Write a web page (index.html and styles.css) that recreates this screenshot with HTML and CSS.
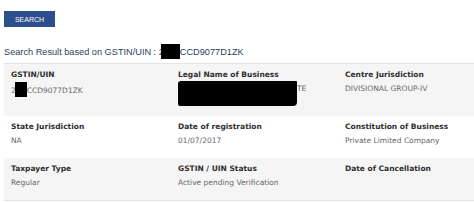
FILE: index.html
```html
<!DOCTYPE html>
<html lang='en'>

<head>
    <meta charset='UTF-8'>
    <meta name='viewport' content='width=device-width, initial-scale=1.0'>
    <title>Search Taxpayer</title>
    <link rel="stylesheet" href="styles.css">
</head>

<body>
    <div class='page'>
        <button class='btn-search' type='button'>SEARCH</button>
        <h4 class='result-title'>Search Result based on GSTIN/UIN : 2<span class='mask mask-title'></span>CCD9077D1ZK</h4>
        <div class='result'>
            <div class='row row-gray'>
                <div class='cell'>
                    <div class='label'>GSTIN/UIN</div>
                    <div class='value'>2<span class='mask mask-id'></span>CCD9077D1ZK</div>
                </div>
                <div class='cell'>
                    <div class='label'>Legal Name of Business</div>
                    <div class='value'><span class='mask mask-name'></span>TE</div>
                </div>
                <div class='cell'>
                    <div class='label'>Centre Jurisdiction</div>
                    <div class='value'>DIVISIONAL GROUP-IV</div>
                </div>
            </div>
            <div class='row'>
                <div class='cell'>
                    <div class='label'>State Jurisdiction</div>
                    <div class='value'>NA</div>
                </div>
                <div class='cell'>
                    <div class='label'>Date of registration</div>
                    <div class='value'>01/07/2017</div>
                </div>
                <div class='cell'>
                    <div class='label'>Constitution of Business</div>
                    <div class='value'>Private Limited Company</div>
                </div>
            </div>
            <div class='row row-gray row-last'>
                <div class='cell'>
                    <div class='label'>Taxpayer Type</div>
                    <div class='value'>Regular</div>
                </div>
                <div class='cell'>
                    <div class='label'>GSTIN / UIN Status</div>
                    <div class='value'>Active pending Verification</div>
                </div>
                <div class='cell'>
                    <div class='label'>Date of Cancellation</div>
                    <div class='value'></div>
                </div>
            </div>
        </div>
    </div>
</body>

</html>
```

FILE: styles.css
```css
body {
    margin: 0;
    background: #fff;
    overflow: hidden;
}

.page {
    padding: 11px 0 0 4px;
}

.btn-search {
    display: block;
    width: 51px;
    height: 16px;
    padding: 0;
    border: none;
    border-radius: 0;
    background: #2c4f8c;
    color: #fff;
    font-family: "Liberation Sans", Arial, sans-serif;
    font-size: 7px;
}

.result-title {
    margin: 17px 0 4px 0;
    font-family: "Liberation Sans", Arial, sans-serif;
    font-size: 9.2px;
    font-weight: normal;
    line-height: 12px;
    color: #2c3d5b;
    white-space: nowrap;
}

.mask {
    display: inline-block;
    background: #000;
}

.mask-title {
    width: 19px;
    height: 15px;
    margin-left: -3px;
    vertical-align: -4px;
}

.result {
    border-top: 1px solid #e4e4e4;
    font-family: "DejaVu Sans", Verdana, sans-serif;
    font-size: 7.5px;
}

.row {
    display: grid;
    grid-template-columns: 167px 167px 1fr;
    padding: 3px 0 10px 0;
}

.row-gray {
    background: #f5f5f5;
}

.row-last {
    border-bottom: 1px solid #e4e4e4;
}

.cell {
    padding-left: 7px;
}

.label {
    line-height: 15px;
    font-weight: bold;
    color: #2e2e2e;
}

.value {
    min-height: 14px;
    line-height: 14px;
    color: #666;
    white-space: nowrap;
}

.mask-id {
    width: 12px;
    height: 15px;
    margin-left: -1px;
    vertical-align: -4px;
}

.mask-name {
    width: 119px;
    height: 25px;
    margin-top: -1px;
    vertical-align: top;
    border-radius: 3px 1px 4px 2px;
}
```
